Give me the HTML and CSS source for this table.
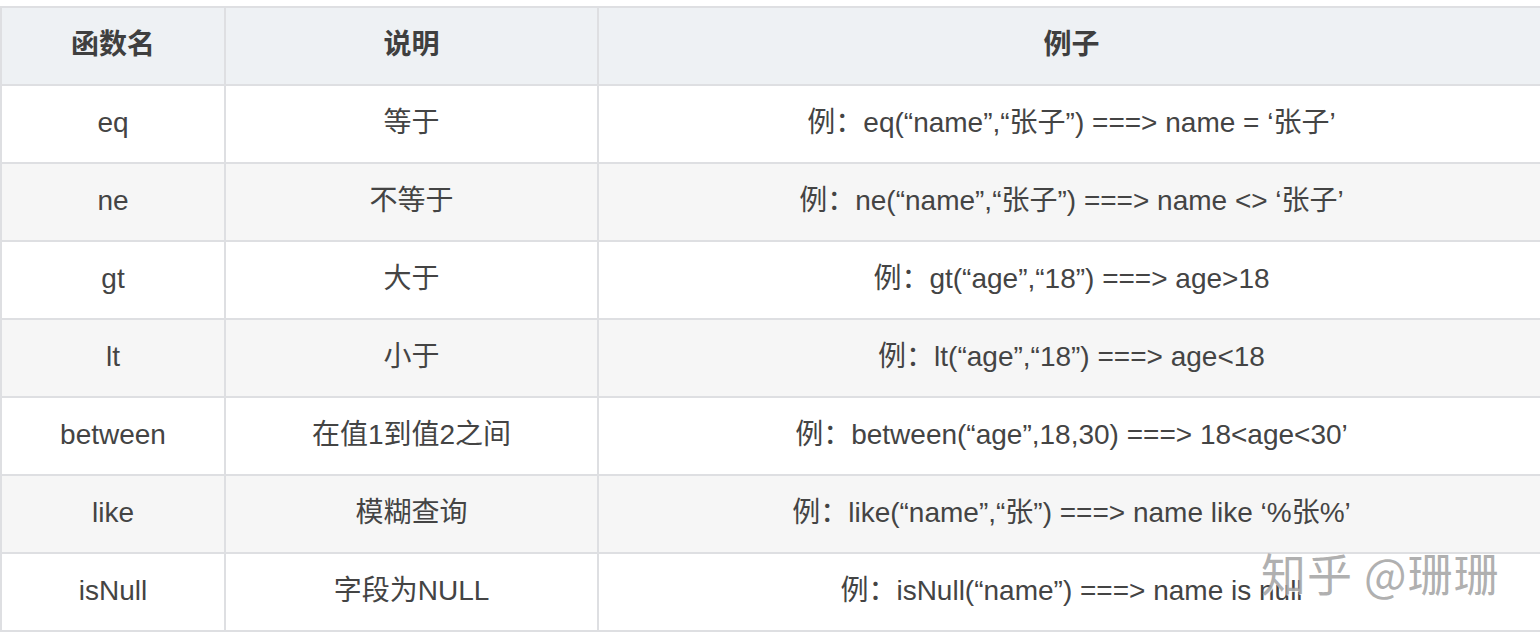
FILE: index.html
```html
<!DOCTYPE html>
<html lang="zh">
<head>
<meta charset="utf-8">
<link rel="stylesheet" href="styles.css">
</head>
<body>
<div class="page">
<table class="tbl">
  <colgroup><col class="c1"><col class="c2"><col class="c3"></colgroup>
  <thead>
    <tr><th>函数名</th><th>说明</th><th>例子</th></tr>
  </thead>
  <tbody>
    <tr><td>eq</td><td>等于</td><td>例：eq(“name”,“张子”) ===&gt; name = ‘张子’</td></tr>
    <tr class="alt"><td>ne</td><td>不等于</td><td>例：ne(“name”,“张子”) ===&gt; name &lt;&gt; ‘张子’</td></tr>
    <tr><td>gt</td><td>大于</td><td>例：gt(“age”,“18”) ===&gt; age&gt;18</td></tr>
    <tr class="alt"><td>lt</td><td>小于</td><td>例：lt(“age”,“18”) ===&gt; age&lt;18</td></tr>
    <tr><td>between</td><td>在值1到值2之间</td><td>例：between(“age”,18,30) ===&gt; 18&lt;age&lt;30’</td></tr>
    <tr class="alt"><td>like</td><td>模糊查询</td><td>例：like(“name”,“张”) ===&gt; name like ‘%张%’</td></tr>
    <tr><td>isNull</td><td>字段为NULL</td><td>例：isNull(“name”) ===&gt; name is null</td></tr>
  </tbody>
</table>
<div class="watermark">知乎 @珊珊</div>
</div>
</body>
</html>
```
FILE: styles.css
```css
html, body {
  margin: 0;
  padding: 0;
  background: #ffffff;
  overflow: hidden;
}
.page {
  position: relative;
  width: 1540px;
  height: 633px;
  padding-top: 6px;
  padding-left: 0;
  box-sizing: border-box;
}
.tbl {
  border-collapse: collapse;
  table-layout: fixed;
  width: 1544px;
  font-family: "Liberation Sans", Arial, "Noto Sans CJK SC", sans-serif;
  font-size: 28px;
  color: #444444;
}
.c1 { width: 224px; }
.c2 { width: 373px; }
.c3 { width: 947px; }
.tbl th, .tbl td {
  border: 2px solid #dedfe2;
  height: 73px;
  padding: 0 0 3px 0;
  line-height: 1.2;
  text-align: center;
  vertical-align: middle;
  white-space: nowrap;
}
.tbl th {
  background: #eef1f4;
  font-weight: bold;
  color: #3f3f3f;
}
.tbl tr.alt td {
  background: #f6f6f6;
}
.watermark {
  position: absolute;
  left: 1261px;
  top: 540px;
  font-family: "Noto Sans CJK SC", sans-serif;
  font-size: 45px;
  color: rgba(150,150,150,0.75);
  text-shadow: 1px 1px 0 rgba(255,255,255,0.8);
  letter-spacing: 1px;
}
```
